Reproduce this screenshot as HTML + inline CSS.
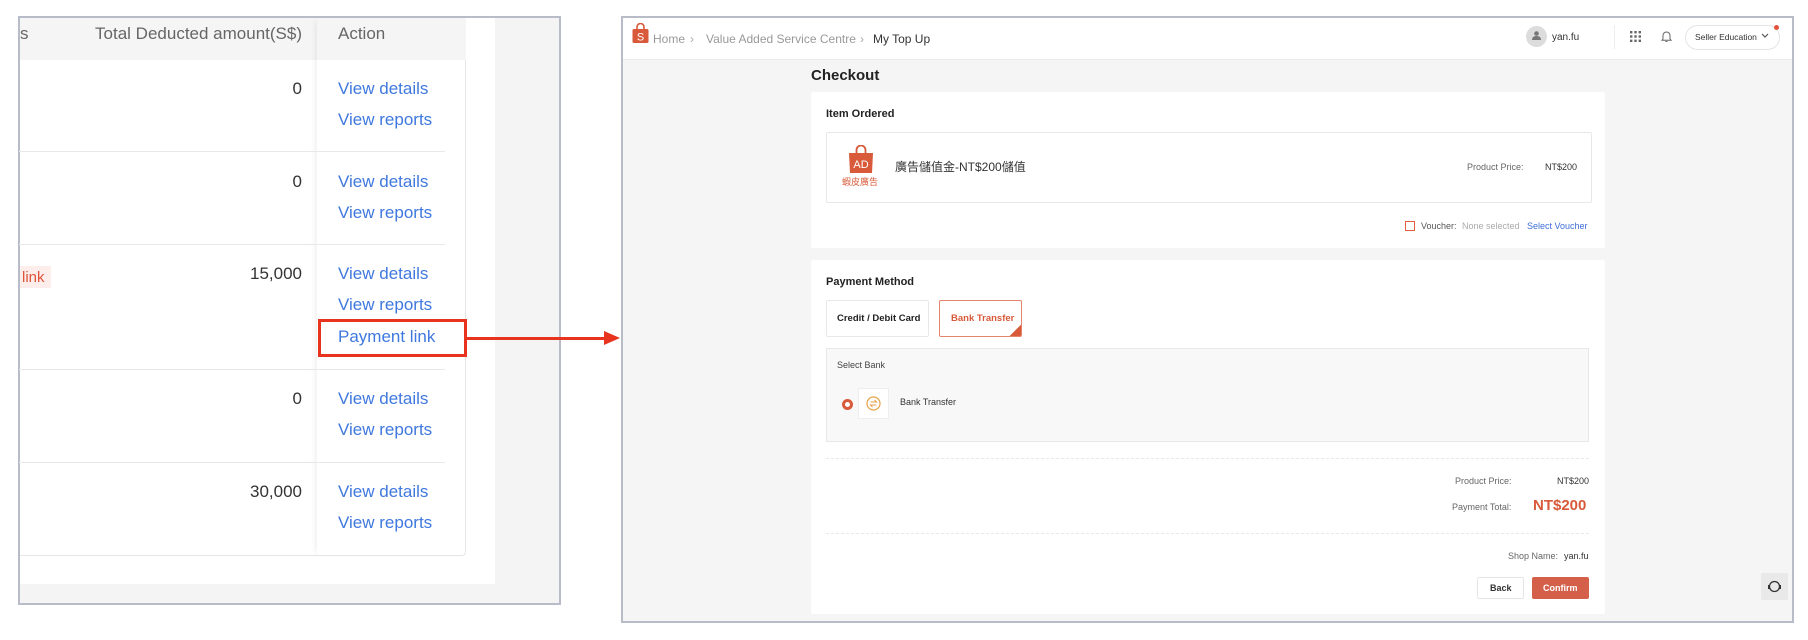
<!DOCTYPE html>
<html><head><meta charset="utf-8"><style>
*{box-sizing:border-box;margin:0;padding:0}
body{width:1808px;height:640px;background:#fff;position:relative;overflow:hidden;font-family:"Liberation Sans","Noto Sans CJK TC",sans-serif}
.a{position:absolute}
.lk{color:#3f78de;font-size:17px;position:absolute;left:338px;line-height:20px}
.num{position:absolute;width:302px;text-align:right;font-size:17px;color:#333;line-height:20px;left:0}
.sep{position:absolute;left:19px;width:426px;height:1px;background:#e8e8e8}
.t{position:absolute;white-space:nowrap;line-height:1}
</style></head><body>
<!-- LEFT PANEL -->
<div class="a" style="left:18px;top:16px;width:543px;height:589px;border:2px solid #b8bcc8;background:#f4f4f4;overflow:hidden">
  <div class="a" style="left:0;top:0;width:475px;height:566px;background:#fff"></div>
  <div class="a" style="left:0;top:0;width:446px;height:538px;background:#fff;border:1px solid #e6e6e6;border-left:none;border-top:none;border-radius:0 0 4px 0"></div>
  <div class="a" style="left:0;top:0;width:446px;height:42px;background:#f5f5f5"></div>
  <div class="a" style="left:297px;top:0;width:148px;height:537px;box-shadow:-4px 0 6px -3px rgba(0,0,0,.08)"></div>
</div>
<div class="t" style="left:20px;top:25px;font-size:17px;color:#666">s</div>
<div class="t" style="left:0;width:302px;text-align:right;top:25px;font-size:17px;color:#666">Total Deducted amount(S$)</div>
<div class="t" style="left:338px;top:25px;font-size:17px;color:#666">Action</div>
<div class="sep" style="top:151px"></div><div class="sep" style="top:244px"></div><div class="sep" style="top:369px"></div><div class="sep" style="top:462px"></div>
<div class="num" style="top:79px">0</div>
<div class="num" style="top:172px">0</div>
<div class="num" style="top:264px">15,000</div>
<div class="num" style="top:389px">0</div>
<div class="num" style="top:482px">30,000</div>
<div class="a" style="left:20px;top:266px;width:31px;height:22px;background:#fdeeec"></div>
<div class="t" style="left:22px;top:270px;font-size:15px;color:#e0533a">link</div>
<div class="lk" style="top:79px">View details</div><div class="lk" style="top:110px">View reports</div>
<div class="lk" style="top:172px">View details</div><div class="lk" style="top:203px">View reports</div>
<div class="lk" style="top:264px">View details</div><div class="lk" style="top:295px">View reports</div><div class="lk" style="top:327px">Payment link</div>
<div class="lk" style="top:389px">View details</div><div class="lk" style="top:420px">View reports</div>
<div class="lk" style="top:482px">View details</div><div class="lk" style="top:513px">View reports</div>
<div class="a" style="left:318px;top:319px;width:149px;height:38px;border:3px solid #e8341f"></div>
<div class="a" style="left:466px;top:337px;width:140px;height:3px;background:#e8341f"></div>
<div class="a" style="left:604px;top:331px;width:0;height:0;border-left:16px solid #e8341f;border-top:7px solid transparent;border-bottom:7px solid transparent"></div>

<!-- RIGHT PANEL -->
<div class="a" style="left:621px;top:16px;width:1173px;height:607px;border:2px solid #b8bcc8;background:#f5f5f5;overflow:hidden"></div>
<div class="a" style="left:623px;top:18px;width:1169px;height:42px;background:#fff;border-bottom:1px solid #ebebeb"></div>
<svg class="a" style="left:632px;top:23px" width="17" height="20" viewBox="0 0 17 20"><path d="M5 6V4a3.5 3.5 0 0 1 7 0v2" fill="none" stroke="#d85a3a" stroke-width="1.6"/><rect x="0.5" y="6" width="16" height="14" rx="1.5" fill="#d85a3a"/><text x="8.5" y="17.5" font-size="11" fill="#fff" text-anchor="middle" font-family="Liberation Sans">S</text></svg>
<div class="t" style="left:653px;top:33px;font-size:12px;color:#999">Home</div>
<div class="t" style="left:690px;top:33px;font-size:12px;color:#aaa">›</div>
<div class="t" style="left:706px;top:33px;font-size:12px;color:#999">Value Added Service Centre</div>
<div class="t" style="left:860px;top:33px;font-size:12px;color:#aaa">›</div>
<div class="t" style="left:873px;top:33px;font-size:12px;color:#333">My Top Up</div>
<div class="a" style="left:1526px;top:26px;width:21px;height:21px;border-radius:50%;background:#dcdcdc"></div>
<svg class="a" style="left:1531px;top:30px" width="11" height="11" viewBox="0 0 11 11"><circle cx="5.5" cy="3.5" r="2.3" fill="#777"/><path d="M1 10c0-3 2-4 4.5-4S10 7 10 10z" fill="#777"/></svg>
<div class="t" style="left:1552px;top:33px;font-size:10px;color:#333">yan.fu</div>
<div class="a" style="left:1614px;top:25px;width:1px;height:24px;background:#eee"></div>
<svg class="a" style="left:1630px;top:31px" width="11" height="11" viewBox="0 0 11 11" fill="#666"><rect x="0" y="0" width="2.4" height="2.4"/><rect x="4.3" y="0" width="2.4" height="2.4"/><rect x="8.6" y="0" width="2.4" height="2.4"/><rect x="0" y="4.3" width="2.4" height="2.4"/><rect x="4.3" y="4.3" width="2.4" height="2.4"/><rect x="8.6" y="4.3" width="2.4" height="2.4"/><rect x="0" y="8.6" width="2.4" height="2.4"/><rect x="4.3" y="8.6" width="2.4" height="2.4"/><rect x="8.6" y="8.6" width="2.4" height="2.4"/></svg>
<svg class="a" style="left:1661px;top:30px" width="11" height="13" viewBox="0 0 11 13"><path d="M2 9V5.5a3.5 3.5 0 0 1 7 0V9l1 1.2H1z" fill="none" stroke="#666" stroke-width="1"/><path d="M4.5 11.5h2" stroke="#666"/></svg>
<div class="a" style="left:1685px;top:25px;width:95px;height:25px;border:1px solid #e5e5e5;border-radius:13px;background:#fff"></div>
<div class="t" style="left:1695px;top:33px;font-size:8.5px;color:#333">Seller Education</div>
<svg class="a" style="left:1761px;top:33px" width="8" height="6" viewBox="0 0 8 6"><path d="M1 1l3 3 3-3" fill="none" stroke="#555" stroke-width="1.2"/></svg>
<div class="a" style="left:1774px;top:25px;width:5px;height:5px;border-radius:50%;background:#e2533a"></div>

<div class="t" style="left:811px;top:68px;font-size:15px;font-weight:bold;color:#222">Checkout</div>
<div class="a" style="left:811px;top:92px;width:794px;height:156px;background:#fff;border-radius:2px"></div>
<div class="t" style="left:826px;top:109px;font-size:11px;font-weight:bold;color:#222">Item Ordered</div>
<div class="a" style="left:826px;top:132px;width:766px;height:71px;border:1px solid #e8e8e8;border-radius:2px"></div>
<svg class="a" style="left:848px;top:145px" width="26" height="28" viewBox="0 0 26 28"><path d="M8.5 8V5a4.5 4.5 0 0 1 9 0v3" fill="none" stroke="#d85a3a" stroke-width="1.8"/><path d="M1 8h24l-1 20H2z" fill="#d85a3a"/><text x="13" y="23" font-size="11" fill="#fff" text-anchor="middle" font-family="Liberation Sans">AD</text></svg>
<div class="t" style="left:842px;top:178px;font-size:9px;color:#d85a3a">蝦皮廣告</div>
<div class="t" style="left:895px;top:161px;font-size:12px;color:#333">廣告儲值金-NT$200儲值</div>
<div class="t" style="left:1467px;top:163px;font-size:9px;color:#666">Product Price:</div>
<div class="t" style="left:1545px;top:163px;font-size:9px;color:#333">NT$200</div>
<div class="a" style="left:1405px;top:221px;width:10px;height:10px;border:1px solid #e2603e"></div>
<div class="t" style="left:1421px;top:222px;font-size:9px;color:#555">Voucher:</div>
<div class="t" style="left:1462px;top:222px;font-size:9px;color:#aaa">None selected</div>
<div class="t" style="left:1527px;top:222px;font-size:9px;color:#3e6fd6">Select Voucher</div>

<div class="a" style="left:811px;top:260px;width:794px;height:354px;background:#fff;border-radius:2px"></div>
<div class="t" style="left:826px;top:277px;font-size:11px;font-weight:bold;color:#222">Payment Method</div>
<div class="a" style="left:826px;top:300px;width:103px;height:37px;border:1px solid #e8e8e8;border-radius:2px"></div>
<div class="t" style="left:837px;top:314px;font-size:9.5px;font-weight:bold;color:#222">Credit / Debit Card</div>
<div class="a" style="left:939px;top:300px;width:83px;height:37px;border:1px solid #e4846a;border-radius:2px;overflow:hidden"><div class="a" style="right:-8px;bottom:-8px;width:16px;height:16px;background:#d85a3a;transform:rotate(45deg)"></div></div>
<div class="t" style="left:951px;top:314px;font-size:9.5px;font-weight:bold;color:#d85a3a">Bank Transfer</div>
<div class="a" style="left:826px;top:348px;width:763px;height:94px;background:#f8f8f8;border:1px solid #e8e8e8"></div>
<div class="t" style="left:837px;top:361px;font-size:9px;color:#444">Select Bank</div>
<div class="a" style="left:842px;top:399px;width:11px;height:11px;border-radius:50%;border:3px solid #d85a3a;background:#fff"></div>
<div class="a" style="left:858px;top:388px;width:31px;height:31px;background:#fff;border:1px solid #eee"></div>
<svg class="a" style="left:866px;top:396px" width="15" height="15" viewBox="0 0 15 15"><circle cx="7.5" cy="7.5" r="6.5" fill="none" stroke="#e6a24a" stroke-width="1.2"/><path d="M4.5 6h6l-2-2M10.5 9h-6l2 2" fill="none" stroke="#e6a24a" stroke-width="1.1"/></svg>
<div class="t" style="left:900px;top:398px;font-size:9px;color:#333">Bank Transfer</div>
<div class="a" style="left:826px;top:458px;width:763px;border-top:1px dashed #e8e8e8"></div>
<div class="t" style="left:1455px;top:477px;font-size:9px;color:#666">Product Price:</div>
<div class="t" style="left:1557px;top:477px;font-size:9px;color:#333">NT$200</div>
<div class="t" style="left:1452px;top:503px;font-size:9px;color:#666">Payment Total:</div>
<div class="t" style="left:1533px;top:498px;font-size:15px;font-weight:bold;color:#d85a3a">NT$200</div>
<div class="a" style="left:826px;top:533px;width:763px;border-top:1px dashed #e8e8e8"></div>
<div class="t" style="left:1508px;top:552px;font-size:9px;color:#666">Shop Name:</div>
<div class="t" style="left:1564px;top:552px;font-size:9px;color:#333">yan.fu</div>
<div class="a" style="left:1477px;top:577px;width:47px;height:22px;border:1px solid #e5e5e5;border-radius:2px;background:#fff"></div>
<div class="t" style="left:1490px;top:584px;font-size:9px;font-weight:bold;color:#333">Back</div>
<div class="a" style="left:1532px;top:577px;width:57px;height:22px;border-radius:2px;background:#d4604a"></div>
<div class="t" style="left:1543px;top:584px;font-size:9px;font-weight:bold;color:#fff">Confirm</div>
<div class="a" style="left:1761px;top:573px;width:27px;height:27px;background:#e9e9e9;border-radius:2px"></div>
<svg class="a" style="left:1767px;top:579px" width="15" height="15" viewBox="0 0 15 15"><circle cx="7.5" cy="7.5" r="5" fill="none" stroke="#333" stroke-width="1.3"/><rect x="1" y="6" width="2" height="4" fill="#333"/><rect x="12" y="6" width="2" height="4" fill="#333"/></svg>
</body></html>
